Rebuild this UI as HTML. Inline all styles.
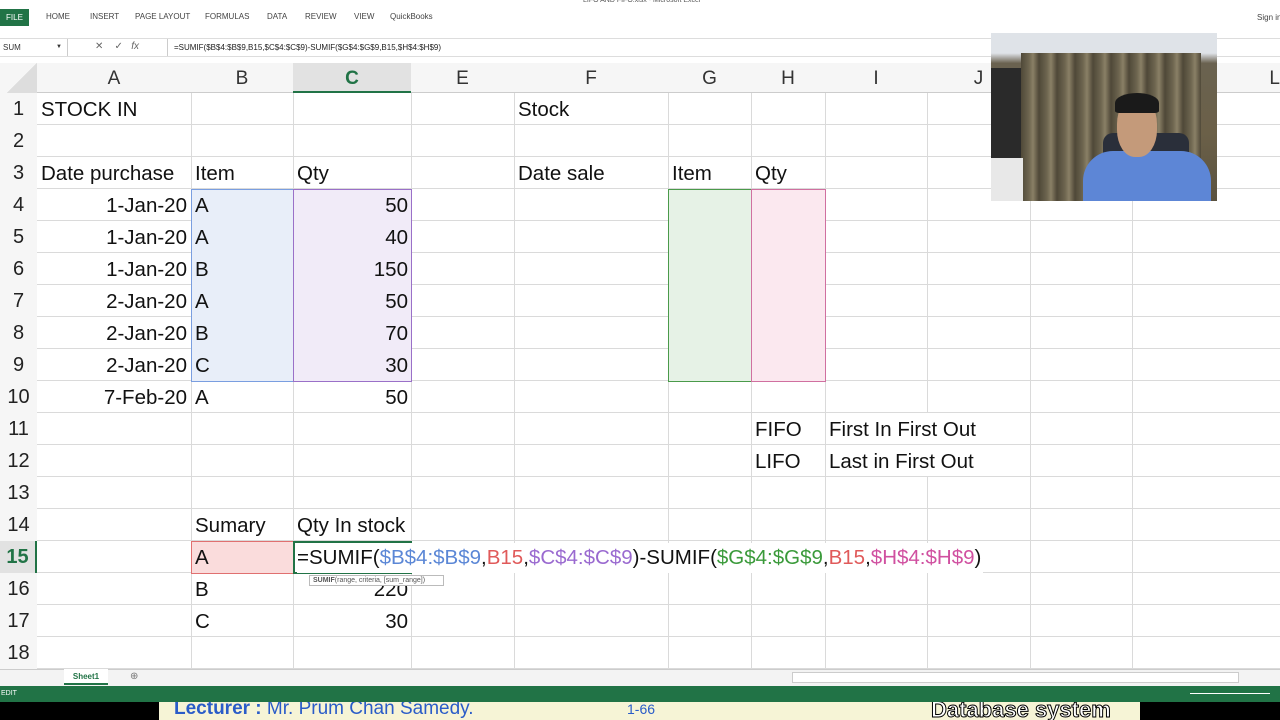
<!DOCTYPE html>
<html><head><meta charset="utf-8"><style>
*{margin:0;padding:0;box-sizing:border-box}
body{width:1280px;height:720px;overflow:hidden;background:#fff;font-family:"Liberation Sans",sans-serif;position:relative}
.a{position:absolute}
.t{position:absolute;font-size:20.5px;line-height:31px;padding-top:1px;color:#111;white-space:nowrap}
.w{background:#fff}
.r{text-align:right}
.vl{position:absolute;top:63px;height:606px;width:1px;background:#dadada}
.hdr{position:absolute;top:63px;height:30px;font-size:19px;line-height:32px;text-align:center;color:#333;background:#f6f6f6;border-bottom:1px solid #ccc}
.rh{position:absolute;left:0;width:37px;font-size:20px;line-height:31px;padding-top:1px;text-align:center;color:#222;background:#f6f6f6}
.menu{position:absolute;top:12px;font-size:8px;color:#444;white-space:nowrap}
</style></head><body>
<div class="a" style="left:583px;top:-3px;font-size:7px;color:#555">LIFO AND FIFO.xlsx - Microsoft Excel</div>
<div class="a" style="left:0;top:9px;width:29px;height:17px;background:#217346;color:#fff;font-size:8px;line-height:17px;text-align:center">FILE</div>
<div class="menu" style="left:46px">HOME</div><div class="menu" style="left:90px">INSERT</div><div class="menu" style="left:135px">PAGE LAYOUT</div><div class="menu" style="left:205px">FORMULAS</div><div class="menu" style="left:267px">DATA</div><div class="menu" style="left:305px">REVIEW</div><div class="menu" style="left:354px">VIEW</div><div class="menu" style="left:390px">QuickBooks</div>
<div class="menu" style="left:1257px;top:13px">Sign in</div>
<div class="a" style="left:0;top:38px;width:1280px;height:19px;border-top:1px solid #ddd;border-bottom:1px solid #ddd;background:#fff"></div>
<div class="a" style="left:0;top:39px;width:68px;height:17px;border-right:1px solid #ccc;font-size:8px;line-height:17px;padding-left:3px;color:#333">SUM<span style="float:right;margin-right:5px;font-size:6px">▼</span></div>
<div class="a" style="left:95px;top:41px;font-size:10px;color:#666">✕&nbsp;&nbsp;&nbsp;&nbsp;✓&nbsp;&nbsp;&nbsp;<i>fx</i></div>
<div class="a" style="left:167px;top:39px;width:1113px;height:17px;border-left:1px solid #ccc;font-size:8px;line-height:17px;padding-left:6px;color:#222">=SUMIF($B$4:$B$9,B15,$C$4:$C$9)-SUMIF($G$4:$G$9,B15,$H$4:$H$9)</div>
<div class="a" style="left:37px;top:93px;width:1243px;height:576px;background:repeating-linear-gradient(to bottom,transparent 0,transparent 31px,#dadada 31px,#dadada 32px)"></div>
<div class="vl" style="left:191px"></div><div class="vl" style="left:293px"></div><div class="vl" style="left:411px"></div><div class="vl" style="left:514px"></div><div class="vl" style="left:668px"></div><div class="vl" style="left:751px"></div><div class="vl" style="left:825px"></div><div class="vl" style="left:927px"></div><div class="vl" style="left:1030px"></div><div class="vl" style="left:1132px"></div>
<div class="a" style="left:0;top:63px;width:1280px;height:30px;background:#f6f6f6;border-bottom:1px solid #ccc"></div>
<div class="a" style="left:0;top:63px;width:37px;height:30px;background:linear-gradient(135deg,#f6f6f6 55%,#ddd 55%)"></div>
<div class="hdr" style="left:37px;width:154px">A</div><div class="hdr" style="left:191px;width:102px">B</div>
<div class="hdr" style="left:293px;width:118px;background:#e2e2e2;color:#217346;font-weight:bold;border-bottom:2px solid #217346">C</div>
<div class="hdr" style="left:411px;width:103px">E</div><div class="hdr" style="left:514px;width:154px">F</div><div class="hdr" style="left:668px;width:83px">G</div><div class="hdr" style="left:751px;width:74px">H</div><div class="hdr" style="left:825px;width:102px">I</div><div class="hdr" style="left:927px;width:103px">J</div><div class="hdr" style="left:1240px;width:40px;text-align:right">L</div>
<div class="a" style="left:0;top:93px;width:37px;height:576px;background:#f6f6f6;border-right:1px solid #ccc"></div>
<div class="rh" style="top:93px">1</div><div class="rh" style="top:125px">2</div><div class="rh" style="top:157px">3</div><div class="rh" style="top:189px">4</div><div class="rh" style="top:221px">5</div><div class="rh" style="top:253px">6</div><div class="rh" style="top:285px">7</div><div class="rh" style="top:317px">8</div><div class="rh" style="top:349px">9</div><div class="rh" style="top:381px">10</div><div class="rh" style="top:413px">11</div><div class="rh" style="top:445px">12</div><div class="rh" style="top:477px">13</div><div class="rh" style="top:509px">14</div>
<div class="rh" style="top:541px;background:#e2e2e2;color:#217346;font-weight:bold;border-right:2px solid #217346">15</div>
<div class="rh" style="top:573px">16</div><div class="rh" style="top:605px">17</div><div class="rh" style="top:637px">18</div>
<div class="a" style="left:191px;top:189px;width:103px;height:193px;background:#e8eef9;border:1px solid #7a9ee0"></div>
<div class="a" style="left:293px;top:189px;width:119px;height:193px;background:#f1ebf8;border:1px solid #9a70c8"></div>
<div class="a" style="left:668px;top:189px;width:84px;height:193px;background:#e6f2e6;border:1px solid #4a9a4a"></div>
<div class="a" style="left:751px;top:189px;width:75px;height:193px;background:#fbe8ef;border:1px solid #d070a0"></div>
<div class="a" style="left:191px;top:541px;width:103px;height:33px;background:#fadcdc;border:1px solid #e07070"></div>
<div class="a" style="left:293px;top:541px;width:119px;height:33px;background:#fff;border:2px solid #217346"></div>
<div class="t" style="left:41px;top:93px">STOCK IN</div><div class="t" style="left:518px;top:93px">Stock</div>
<div class="t" style="left:41px;top:157px">Date purchase</div><div class="t" style="left:195px;top:157px">Item</div><div class="t" style="left:297px;top:157px">Qty</div>
<div class="t" style="left:518px;top:157px">Date sale</div><div class="t" style="left:672px;top:157px">Item</div><div class="t" style="left:755px;top:157px">Qty</div>
<div class="t r" style="left:37px;width:150px;top:189px">1-Jan-20</div><div class="t" style="left:195px;top:189px">A</div><div class="t r" style="left:293px;width:115px;top:189px">50</div>
<div class="t r" style="left:37px;width:150px;top:221px">1-Jan-20</div><div class="t" style="left:195px;top:221px">A</div><div class="t r" style="left:293px;width:115px;top:221px">40</div>
<div class="t r" style="left:37px;width:150px;top:253px">1-Jan-20</div><div class="t" style="left:195px;top:253px">B</div><div class="t r" style="left:293px;width:115px;top:253px">150</div>
<div class="t r" style="left:37px;width:150px;top:285px">2-Jan-20</div><div class="t" style="left:195px;top:285px">A</div><div class="t r" style="left:293px;width:115px;top:285px">50</div>
<div class="t r" style="left:37px;width:150px;top:317px">2-Jan-20</div><div class="t" style="left:195px;top:317px">B</div><div class="t r" style="left:293px;width:115px;top:317px">70</div>
<div class="t r" style="left:37px;width:150px;top:349px">2-Jan-20</div><div class="t" style="left:195px;top:349px">C</div><div class="t r" style="left:293px;width:115px;top:349px">30</div>
<div class="t r" style="left:37px;width:150px;top:381px">7-Feb-20</div><div class="t" style="left:195px;top:381px">A</div><div class="t r" style="left:293px;width:115px;top:381px">50</div>
<div class="t" style="left:755px;top:413px">FIFO</div><div class="t w" style="left:829px;top:413px;height:31px">First In First Out</div>
<div class="t" style="left:755px;top:445px">LIFO</div><div class="t w" style="left:829px;top:445px;height:31px">Last in First Out</div>
<div class="t" style="left:195px;top:509px">Sumary</div><div class="t" style="left:297px;top:509px">Qty In stock</div>
<div class="t" style="left:195px;top:541px">A</div>
<div class="t w" style="left:297px;top:543px;padding-top:0;height:30px;line-height:30px;padding-right:2px">=SUMIF(<span style="color:#5b87d6">$B$4:$B$9</span>,<span style="color:#e05a5a">B15</span>,<span style="color:#9a6ad0">$C$4:$C$9</span>)-SUMIF(<span style="color:#3a9a3a">$G$4:$G$9</span>,<span style="color:#e05a5a">B15</span>,<span style="color:#d050a0">$H$4:$H$9</span>)</div>
<div class="t" style="left:195px;top:573px">B</div><div class="t r" style="left:293px;width:115px;top:573px">220</div>
<div class="t" style="left:195px;top:605px">C</div><div class="t r" style="left:293px;width:115px;top:605px">30</div>
<div class="a" style="left:309px;top:575px;width:135px;height:11px;border:1px solid #bbb;background:#fff;font-size:7px;line-height:9px;padding-left:3px;color:#555;white-space:nowrap"><b>SUMIF</b>(range, criteria, [sum_range])</div>
<div class="a" style="left:991px;top:33px;width:226px;height:168px;overflow:hidden;background:linear-gradient(180deg,#dfe3e8 0,#dfe3e8 12%,#6a6250 18%,#6b6048 60%,#5a5240 100%)">
 <div class="a" style="left:30px;top:20px;width:180px;height:148px;background:repeating-linear-gradient(90deg,#4f4838 0,#6e6650 8px,#8a8066 12px,#4f4838 18px)"></div>
 <div class="a" style="left:0;top:35px;width:30px;height:133px;background:#2a2a2a"></div>
 <div class="a" style="left:0;top:125px;width:32px;height:43px;background:#e8e8e8"></div>
 <div class="a" style="left:112px;top:100px;width:86px;height:68px;background:#2a2f3a;border-radius:10px 10px 0 0"></div>
 <div class="a" style="left:92px;top:118px;width:128px;height:50px;background:#5d86d6;border-radius:30px 30px 0 0"></div>
 <div class="a" style="left:126px;top:64px;width:40px;height:60px;background:#c49a7a;border-radius:45%"></div>
 <div class="a" style="left:124px;top:60px;width:44px;height:20px;background:#1a1a1a;border-radius:50% 50% 10% 10%"></div>
</div>
<div class="a" style="left:0;top:669px;width:1280px;height:17px;background:#f3f3f3;border-top:1px solid #ccc"></div>
<div class="a" style="left:64px;top:669px;width:44px;height:16px;background:#fff;border-bottom:2px solid #217346;font-size:8px;line-height:15px;text-align:center;color:#217346;font-weight:bold">Sheet1</div>
<div class="a" style="left:130px;top:671px;font-size:10px;color:#777">⊕</div>
<div class="a" style="left:792px;top:672px;width:447px;height:11px;border:1px solid #ccc;background:#fff"></div>
<div class="a" style="left:0;top:686px;width:1280px;height:16px;background:#217346;color:#fff;font-size:7px;line-height:16px;padding-left:1px">EDIT</div>
<div class="a" style="left:1190px;top:693px;width:80px;height:1px;background:#fff"></div>
<div class="a" style="left:0;top:702px;width:1280px;height:18px;background:#000"></div>
<div class="a" style="left:159px;top:702px;width:981px;height:18px;background:#f6f4d6;overflow:hidden">
 <div class="a" style="left:15px;top:-4px;font-size:19px;color:#2a5cc8;white-space:nowrap"><b>Lecturer :</b> Mr. Prum Chan Samedy.</div>
 <div class="a" style="left:468px;top:-1px;font-size:14px;color:#2a5cc8">1-66</div>
 <div class="a" style="left:772px;top:-5px;font-size:22px;font-weight:bold;color:#fff;-webkit-text-stroke:1px #000;white-space:nowrap">Database system</div>
</div>
</body></html>
